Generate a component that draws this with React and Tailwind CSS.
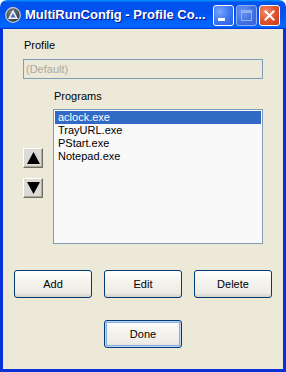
import React from 'react';

const font = { fontFamily: '"Liberation Sans", Arial, sans-serif' };

function AppIcon() {
  return (
    <svg width="16" height="16" viewBox="0 0 16 16">
      <defs>
        <radialGradient id="ig" cx="0.4" cy="0.35" r="0.7">
          <stop offset="0" stopColor="#7d8791" />
          <stop offset="1" stopColor="#2a3037" />
        </radialGradient>
      </defs>
      <circle cx="8" cy="8" r="7.3" fill="url(#ig)" stroke="#c9d0d8" strokeWidth="1.2" />
      <path d="M8 2.6 L13 12 L3 12 Z" fill="#eef2f8" />
      <path d="M8 6 L10.6 10.6 L5.4 10.6 Z" fill="#4f78b4" />
    </svg>
  );
}

function TitleButton({ kind }) {
  if (kind === 'close') {
    return (
      <div className="w-[21px] h-[21px] rounded-[3px] border border-white bg-[radial-gradient(circle_at_30%_30%,#f08a6a,#e0502a_55%,#c8381a)] flex items-center justify-center">
        <svg width="11" height="11" viewBox="0 0 11 11">
          <path d="M1.5 1.5 L9.5 9.5 M9.5 1.5 L1.5 9.5" stroke="white" strokeWidth="2" strokeLinecap="square" />
        </svg>
      </div>
    );
  }
  if (kind === 'max') {
    return (
      <div className="w-[21px] h-[21px] rounded-[3px] border border-[#8fb0f4] bg-[radial-gradient(circle_at_30%_30%,#6b96f0,#3e6fe0_60%,#3462d6)] flex items-center justify-center">
        <div className="w-[11px] h-[11px] border border-[#8fb0f4] border-t-[3px]" />
      </div>
    );
  }
  return (
    <div className="w-[21px] h-[21px] rounded-[3px] border border-white bg-[radial-gradient(circle_at_30%_30%,#7aa5fb,#3a75f2_55%,#2a5fe0)] flex items-end pb-[4px] pl-[4px]">
      <div className="w-[7px] h-[3px] bg-white" />
    </div>
  );
}

function ArrowButton({ up }) {
  return (
    <div className="w-[20px] h-[20px] bg-[#dcdad4] border-t border-l border-white border-b border-r border-b-[#716f64] border-r-[#716f64] shadow-[inset_-1px_-1px_0_#aca899] flex items-center justify-center">
      <svg width="13" height="12" viewBox="0 0 13 12">
        {up ? <path d="M6.5 0 L13 12 L0 12 Z" fill="black" /> : <path d="M0 0 L13 0 L6.5 12 Z" fill="black" />}
      </svg>
    </div>
  );
}

function XpButton({ children, isDefault }) {
  return (
    <button
      type="button"
      className={`w-[78px] h-[28px] rounded-[3px] border border-[#003c74] bg-[linear-gradient(180deg,#ffffff,#f4f3ee_40%,#ecebe6_85%,#d6d0c5)] text-[11px] font-normal text-black ${isDefault ? 'shadow-[inset_0_0_0_1px_#bcd4f6,inset_0_0_0_2px_#89ade4]' : ''}`}
      style={font}
    >
      {children}
    </button>
  );
}

export default function App() {
  const programs = ['aclock.exe', 'TrayURL.exe', 'PStart.exe', 'Notepad.exe'];

  return (
    <div className="w-[286px] h-[372px] flex flex-col" style={font}>
      <div className="h-[29px] rounded-t-[7px] bg-[linear-gradient(180deg,#0997ff,#0053ee_8%,#0050ee_40%,#0066ff_88%,#0066ff_93%,#005bff_95%,#003dd7_96%,#003dd7)] flex items-center pl-[5px] pr-[6px]">
        <AppIcon />
        <span className="ml-[4px] text-[13px] font-bold text-white leading-none [text-shadow:1px_1px_#0f1089]">
          MultiRunConfig - Profile Co...
        </span>
        <div className="ml-auto flex gap-[2px] pt-[2px]">
          <TitleButton kind="min" />
          <TitleButton kind="max" />
          <TitleButton kind="close" />
        </div>
      </div>
      <div className="flex-1 bg-[#ece9d8] border-x-[3px] border-b-[3px] border-[#0831d9] flex flex-col text-[11px] leading-[13px] text-black">
        <div className="pl-[21px] pt-[10px]">Profile</div>
        <div className="ml-[20px] mt-[7px] w-[240px] h-[20px] border border-[#7f9db9] bg-[#ece9d8] text-[#aca899] pl-[2px] flex items-center">
          (Default)
        </div>
        <div className="flex mt-[11px] pl-[20px]">
          <div className="w-[30px] pt-[58px] flex flex-col gap-[10px]">
            <ArrowButton up />
            <ArrowButton />
          </div>
          <div className="flex flex-col">
            <div className="pl-[1px]">Programs</div>
            <div className="mt-[6px] w-[210px] h-[135px] border border-[#7f9db9] bg-[#f9f9f9] p-[1px]">
              {programs.map((p, i) => (
                <div key={p} className={`h-[13px] pl-[3px] ${i === 0 ? 'bg-[#316ac5] text-white' : ''}`}>
                  {p}
                </div>
              ))}
            </div>
          </div>
        </div>
        <div className="flex gap-[12px] pl-[11px] mt-[26px]">
          <XpButton>Add</XpButton>
          <XpButton>Edit</XpButton>
          <XpButton>Delete</XpButton>
        </div>
        <div className="flex justify-center mt-[22px]">
          <XpButton isDefault>Done</XpButton>
        </div>
      </div>
    </div>
  );
}
